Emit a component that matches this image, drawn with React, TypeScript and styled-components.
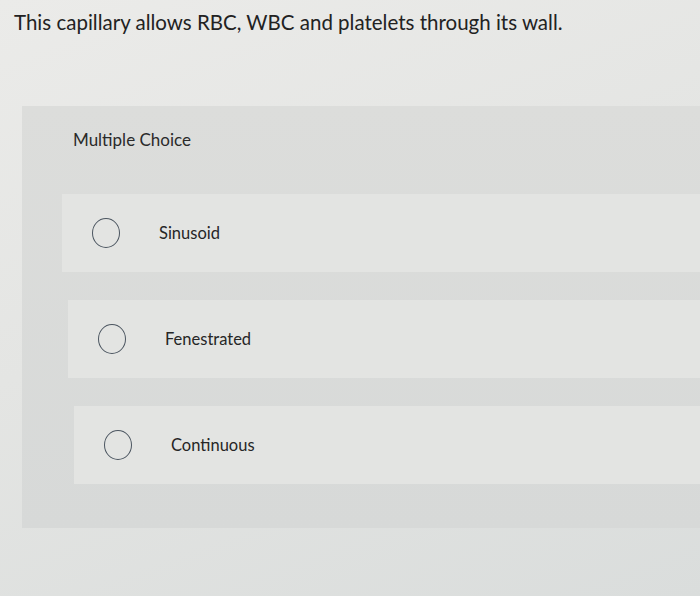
import React, { useState } from "react";
import styled, { createGlobalStyle } from "styled-components";

const GlobalStyle = createGlobalStyle`
  html, body {
    margin: 0;
    padding: 0;
  }
  body {
    width: 700px;
    height: 596px;
    overflow: hidden;
    font-family: Lato, "Open Sans", "Liberation Sans", sans-serif;
    background: linear-gradient(160deg, #ebebe9 0%, #e4e5e3 45%, #dadddc 100%);
    color: #2b2b2b;
  }
`;

const Page = styled.div`
  padding: 8px 0 0 14px;
`;

const Prompt = styled.h1`
  margin: 0;
  font-size: 20.5px;
  font-weight: 400;
  line-height: 28px;
  color: #222;
`;

const Panel = styled.section`
  margin: 70px 0 0 8px;
  padding: 0 0 44px 40px;
  background: linear-gradient(180deg, #dcdddb 0%, #d7d9d8 100%);
`;

const Header = styled.div`
  height: 66px;
  display: flex;
  align-items: center;
  padding-left: 11px;
  font-size: 17px;
  color: #2a2a2a;
`;

const Options = styled.ul`
  list-style: none;
  margin: 22px 0 0;
  padding: 0;
  display: flex;
  flex-direction: column;
  gap: 28px;
`;

const Option = styled.li<{ $shift: number }>`
  height: 78px;
  margin-left: ${(p) => p.$shift}px;
  display: flex;
  align-items: center;
  gap: 39px;
  padding-left: 30px;
  background: #e3e4e2;
  cursor: pointer;
`;

const Radio = styled.span<{ $checked: boolean }>`
  width: 28px;
  height: 30px;
  box-sizing: border-box;
  border-radius: 50%;
  border: 1.6px solid #4b5560;
  background: ${(p) => (p.$checked ? "#4b5560" : "transparent")};
  flex: none;
`;

const Label = styled.span`
  font-size: 16.5px;
  color: #262626;
`;

const choices = ["Sinusoid", "Fenestrated", "Continuous"];

export default function App() {
  const [picked, setPicked] = useState<number | null>(null);
  return (
    <Page>
      <GlobalStyle />
      <Prompt>This capillary allows RBC, WBC and platelets through its wall.</Prompt>
      <Panel>
        <Header>Multiple Choice</Header>
        <Options>
          {choices.map((c, i) => (
            <Option key={c} $shift={i * 6} onClick={() => setPicked(i)}>
              <Radio $checked={picked === i} />
              <Label>{c}</Label>
            </Option>
          ))}
        </Options>
      </Panel>
    </Page>
  );
}
